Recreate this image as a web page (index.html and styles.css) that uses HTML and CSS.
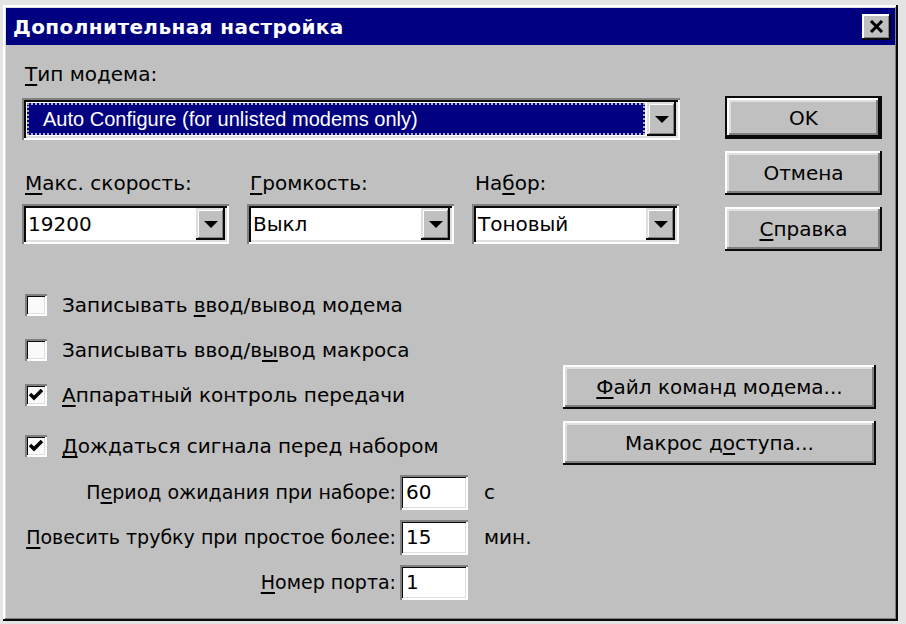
FILE: index.html
```html
<!DOCTYPE html>
<html lang="ru">
<head>
    <meta charset="UTF-8">
    <title>Дополнительная настройка</title>
    <link rel="stylesheet" href="styles.css">
</head>
<body>
    <div class="window">
        <div class="titlebar">
            <span class="title">Дополнительная настройка</span>
            <div class="close">
                <svg width="15" height="13" viewBox="0 0 15 13">
                    <path d="M2 1 L13 12 M13 1 L2 12" stroke="#000" stroke-width="3"/>
                </svg>
            </div>
        </div>

        <div class="content">
            <div class="top">
                <div class="fields">
                    <div class="label"><u>Т</u>ип модема:</div>
                    <div class="combo combo-wide">
                        <div class="combo-text selected">Auto Configure (for unlisted modems only)</div>
                        <div class="arrow"><span class="tri"></span></div>
                    </div>

                    <div class="row-labels">
                        <div class="label col"><u>М</u>акс. скорость:</div>
                        <div class="label col"><u>Г</u>ромкость:</div>
                        <div class="label col">На<u>б</u>ор:</div>
                    </div>
                    <div class="row-combos">
                        <div class="combo">
                            <div class="combo-text">19200</div>
                            <div class="arrow"><span class="tri"></span></div>
                        </div>
                        <div class="combo">
                            <div class="combo-text">Выкл</div>
                            <div class="arrow"><span class="tri"></span></div>
                        </div>
                        <div class="combo">
                            <div class="combo-text">Тоновый</div>
                            <div class="arrow"><span class="tri"></span></div>
                        </div>
                    </div>
                </div>

                <div class="actions">
                    <div class="btn btn-default">OK</div>
                    <div class="btn">Отмена</div>
                    <div class="btn"><u>С</u>правка</div>
                </div>
            </div>

            <div class="middle">
                <div class="checks">
                    <div class="check">
                        <span class="box"></span>
                        <span>Записывать <u>в</u>вод/вывод модема</span>
                    </div>
                    <div class="check">
                        <span class="box"></span>
                        <span>Записывать ввод/в<u>ы</u>вод макроса</span>
                    </div>
                    <div class="check">
                        <span class="box">
                            <svg width="18" height="18" viewBox="0 0 18 18"><path d="M3 8 L7 12 L15 4" fill="none" stroke="#000" stroke-width="3.5"/></svg>
                        </span>
                        <span><u>А</u>ппаратный контроль передачи</span>
                    </div>
                    <div class="check check-last">
                        <span class="box">
                            <svg width="18" height="18" viewBox="0 0 18 18"><path d="M3 8 L7 12 L15 4" fill="none" stroke="#000" stroke-width="3.5"/></svg>
                        </span>
                        <span><u>Д</u>ождаться сигнала перед набором</span>
                    </div>
                </div>

                <div class="tools">
                    <div class="btn btn-wide"><u>Ф</u>айл команд модема...</div>
                    <div class="btn btn-wide">Макрос д<u>о</u>ступа...</div>
                </div>
            </div>

            <div class="form">
                <div class="form-label">П<u>е</u>риод ожидания при наборе:</div>
                <div class="field">60</div>
                <div class="unit">с</div>

                <div class="form-label"><u>П</u>овесить трубку при простое более:</div>
                <div class="field">15</div>
                <div class="unit">мин.</div>

                <div class="form-label"><u>Н</u>омер порта:</div>
                <div class="field">1</div>
                <div class="unit"></div>
            </div>
        </div>
    </div>
</body>
</html>
```

FILE: styles.css
```css
body {
    margin: 0;
    background: #e4e4e4;
    font-family: 'DejaVu Sans', 'Liberation Sans', sans-serif;
    font-size: 20px;
    color: #000;
}

u {
    text-decoration-thickness: 2px;
    text-underline-offset: 3px;
}

.window {
    margin: 5px 0 0 3px;
    width: 895px;
    height: 616px;
    box-sizing: border-box;
    padding: 3px;
    background: #c0c0c0;
    box-shadow: inset -2px -2px #0a0a0a, inset 2px 2px #fff, inset -3px -3px #808080, inset 3px 3px #dfdfdf;
}

.titlebar {
    height: 37px;
    background: #000080;
    display: flex;
    align-items: center;
    justify-content: space-between;
    padding: 0 4px 0 7px;
}

.title {
    color: #fff;
    font-weight: bold;
    font-size: 20px;
    letter-spacing: 0.4px;
}

.close {
    width: 29px;
    height: 26px;
    background: #c0c0c0;
    display: flex;
    align-items: center;
    justify-content: center;
    box-shadow: inset -2px -2px #0a0a0a, inset 2px 2px #fff, inset -3px -3px #808080;
}

.content {
    padding: 17px 13px 0 16px;
}

/* top part: combos + main buttons */
.top {
    display: flex;
    justify-content: space-between;
}

.fields {
    width: 658px;
}

.label {
    height: 24px;
    line-height: 24px;
    padding-left: 3px;
}

.combo {
    height: 40px;
    width: 207px;
    box-sizing: border-box;
    padding: 4px;
    background: #fff;
    display: flex;
    box-shadow: inset 2px 2px #808080, inset -2px -2px #fff, inset 4px 4px #0a0a0a, inset -4px -4px #dfdfdf;
}

.combo-wide {
    width: 658px;
    height: 42px;
    margin-top: 12px;
}

.combo-text {
    flex: 1;
    line-height: 32px;
    padding-left: 2px;
}

.combo-text.selected {
    margin: 1px 2px 1px 1px;
    background: #000080;
    color: #fff;
    padding-left: 16px;
    font-family: 'Liberation Sans', sans-serif;
    outline: 2px dotted #a8a8c8;
    outline-offset: -2px;
}

.arrow {
    width: 29px;
    background: #c0c0c0;
    display: flex;
    align-items: center;
    justify-content: center;
    box-shadow: inset -2px -2px #0a0a0a, inset 2px 2px #dfdfdf, inset -3px -3px #808080, inset 3px 3px #fff;
}

.tri {
    width: 0;
    height: 0;
    border-left: 7px solid transparent;
    border-right: 7px solid transparent;
    border-top: 7px solid #000;
}

.row-labels,
.row-combos {
    display: flex;
    gap: 18px;
}

.row-labels {
    margin-top: 31px;
}

.row-labels .col {
    width: 207px;
    box-sizing: border-box;
}

.row-combos {
    margin-top: 9px;
}

.actions {
    width: 157px;
    margin-top: 34px;
    display: flex;
    flex-direction: column;
    gap: 12px;
}

.btn {
    height: 44px;
    box-sizing: border-box;
    background: #c0c0c0;
    display: flex;
    align-items: center;
    justify-content: center;
    box-shadow: inset -2px -2px #0a0a0a, inset 2px 2px #fff, inset -4px -4px #808080, inset 4px 4px #dfdfdf;
}

.btn-default {
    height: 43px;
    border: 2px solid #0a0a0a;
}

/* checkboxes + extra buttons */
.middle {
    display: flex;
    justify-content: space-between;
    margin-top: 39px;
}

.checks {
    display: flex;
    flex-direction: column;
    gap: 15px;
}

.check {
    height: 30px;
    display: flex;
    align-items: center;
    gap: 15px;
    padding-left: 3px;
}

.check-last {
    margin-top: 6px;
}

.box {
    width: 22px;
    height: 22px;
    box-sizing: border-box;
    background: #fafafa;
    display: flex;
    align-items: center;
    justify-content: center;
    box-shadow: inset 2px 2px #808080, inset -2px -2px #fff, inset 3px 3px #0a0a0a, inset -3px -3px #dfdfdf;
}

.tools {
    width: 313px;
    margin: 75px 6px 0 0;
    display: flex;
    flex-direction: column;
    gap: 12px;
}

/* numeric fields at the bottom */
.form {
    display: grid;
    grid-template-columns: 374px 68px auto;
    column-gap: 4px;
    row-gap: 10px;
    margin-top: 10px;
}

.form-label {
    text-align: right;
    line-height: 35px;
    font-size: 19px;
    white-space: nowrap;
}

.field {
    height: 35px;
    box-sizing: border-box;
    background: #fff;
    line-height: 35px;
    padding-left: 6px;
    box-shadow: inset 2px 2px #808080, inset -2px -2px #fff, inset 3px 3px #0a0a0a, inset -3px -3px #dfdfdf;
}

.unit {
    line-height: 35px;
    padding-left: 12px;
}
```
